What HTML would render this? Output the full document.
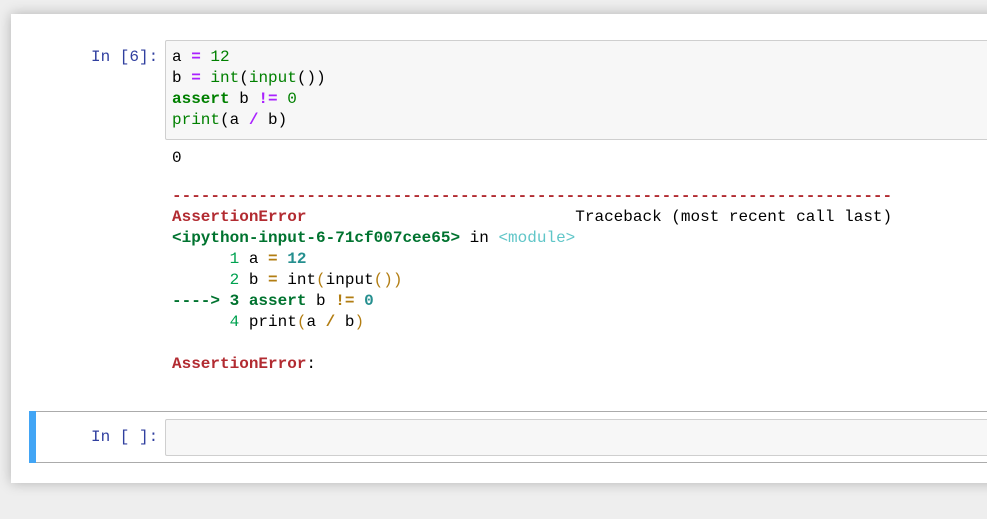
<!DOCTYPE html>
<html><head><style>
body{margin:0;background:#eee;width:987px;height:519px;overflow:hidden;position:relative;font-family:"Liberation Mono",monospace;font-size:16px;}
.nb{position:absolute;left:11px;top:14px;width:990px;height:469px;background:#fff;box-shadow:0 0 12px rgba(0,0,0,.25);}
.t{position:absolute;white-space:pre;line-height:21px;}
.p{color:#303f9f;}
.in{position:absolute;left:165px;top:40px;width:830px;height:98px;background:#f7f7f7;border:1px solid #cfcfcf;border-radius:2px;}
.k{color:#008000;font-weight:bold}.o{color:#aa22ff;font-weight:bold}.n{color:#008000}.b{color:#008000}
.r{color:#b22b31;font-weight:bold}.g{color:#00732f;font-weight:bold}.c{color:#60c6c8}.lg{color:#00a250}.cy{color:#258f8f;font-weight:bold}.y{color:#b27d12}.yb{color:#b27d12;font-weight:bold}
.cell2{position:absolute;left:29px;top:411px;width:980px;height:50px;border:1px solid #ababab;border-left:none;}
.bar{position:absolute;left:29px;top:411px;width:7px;height:52px;background:#42a5f5;}
.in2{position:absolute;left:165px;top:419px;width:830px;height:35px;background:#f7f7f7;border:1px solid #cfcfcf;border-radius:2px;}
</style></head><body>
<div class="nb"></div>
<div class="t p" style="left:91px;top:47px">In [6]:</div>
<div class="in"></div>
<div class="t" style="left:172px;top:47px">a <span class="o">=</span> <span class="n">12</span>
b <span class="o">=</span> <span class="b">int</span>(<span class="b">input</span>())
<span class="k">assert</span> b <span class="o">!=</span> <span class="n">0</span>
<span class="b">print</span>(a <span class="o">/</span> b)</div>
<div class="t" style="left:172px;top:148px">0</div>
<div class="t" style="left:172px;top:186px"><span class="r">---------------------------------------------------------------------------</span>
<span class="r">AssertionError</span>                            Traceback (most recent call last)
<span class="g">&lt;ipython-input-6-71cf007cee65&gt;</span> in <span class="c">&lt;module&gt;</span>
<span class="lg">      1</span> a <span class="yb">=</span> <span class="cy">12</span>
<span class="lg">      2</span> b <span class="yb">=</span> int<span class="y">(</span>input<span class="y">()</span><span class="y">)</span>
<span class="g">----&gt; 3</span><span class="g"> assert</span> b <span class="yb">!=</span> <span class="cy">0</span>
<span class="lg">      4</span> print<span class="y">(</span>a <span class="yb">/</span> b<span class="y">)</span>

<span class="r">AssertionError</span>: </div>
<div class="cell2"></div><div class="bar"></div>
<div class="t p" style="left:91px;top:427px">In [ ]:</div>
<div class="in2"></div>
</body></html>
